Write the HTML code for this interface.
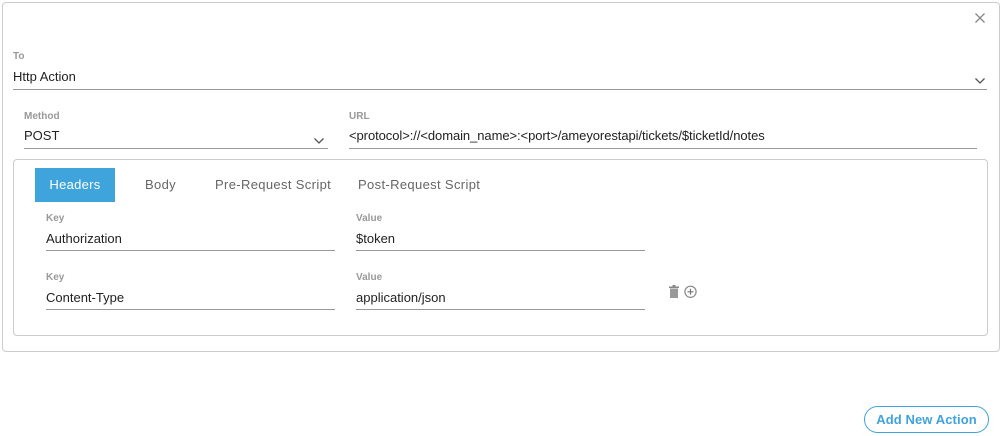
<!DOCTYPE html>
<html><head><meta charset="utf-8"><style>
*{margin:0;padding:0;box-sizing:border-box}
body{width:1005px;height:436px;background:#fff;font-family:"Liberation Sans",sans-serif;position:relative;overflow:hidden;color:#222}
.a{position:absolute;white-space:nowrap}
.lbl{font-size:10px;font-weight:bold;color:#999}
.val{font-size:13px;color:#222}
.ul{position:absolute;height:1px;background:#999}
.tab{font-size:13px;color:#666;letter-spacing:.35px}
</style></head><body>
<div class="a" style="left:2px;top:2px;width:998px;height:350px;border:1px solid #ccc;border-radius:4px"></div>
<svg class="a" style="left:974px;top:12px" width="12" height="12" viewBox="0 0 12 12"><path d="M1.5 1.5L10.5 10.5M10.5 1.5L1.5 10.5" stroke="#888" stroke-width="1.3"/></svg>
<div class="a lbl" style="left:13px;top:51px">To</div>
<div class="a val" style="left:13px;top:69px">Http Action</div>
<div class="ul" style="left:13px;top:89px;width:974px"></div>
<svg class="a" style="left:974px;top:77px" width="12" height="8" viewBox="0 0 12 8"><path d="M1.5 1.5L6 6L10.5 1.5" stroke="#555" stroke-width="1.3" fill="none"/></svg>
<div class="a lbl" style="left:24px;top:111px">Method</div>
<div class="a val" style="left:24px;top:128px">POST</div>
<div class="ul" style="left:24px;top:148px;width:304px"></div>
<svg class="a" style="left:313px;top:137px" width="12" height="8" viewBox="0 0 12 8"><path d="M1.5 1.5L6 6L10.5 1.5" stroke="#555" stroke-width="1.3" fill="none"/></svg>
<div class="a lbl" style="left:349px;top:111px">URL</div>
<div class="a val" style="left:349px;top:128px;letter-spacing:-0.07px">&lt;protocol&gt;://&lt;domain_name&gt;:&lt;port&gt;/ameyorestapi/tickets/$ticketId/notes</div>
<div class="ul" style="left:349px;top:148px;width:628px"></div>
<div class="a" style="left:13px;top:159px;width:975px;height:177px;border:1px solid #ccc;border-radius:4px"></div>
<div class="a" style="left:35px;top:168px;width:80px;height:34px;background:#3fa3dc;color:#fff;font-size:13px;text-align:center;line-height:34px;letter-spacing:.3px">Headers</div>
<div class="a tab" style="left:145px;top:177px">Body</div>
<div class="a tab" style="left:215px;top:177px">Pre-Request Script</div>
<div class="a tab" style="left:358px;top:177px">Post-Request Script</div>
<div class="a lbl" style="left:46px;top:213px">Key</div>
<div class="a val" style="left:46px;top:231px">Authorization</div>
<div class="ul" style="left:46px;top:250px;width:289px"></div>
<div class="a lbl" style="left:356px;top:213px">Value</div>
<div class="a val" style="left:356px;top:231px">$token</div>
<div class="ul" style="left:356px;top:250px;width:289px"></div>
<div class="a lbl" style="left:46px;top:272px">Key</div>
<div class="a val" style="left:46px;top:290px">Content-Type</div>
<div class="ul" style="left:46px;top:309px;width:289px"></div>
<div class="a lbl" style="left:356px;top:272px">Value</div>
<div class="a val" style="left:356px;top:290px">application/json</div>
<div class="ul" style="left:356px;top:309px;width:289px"></div>
<svg class="a" style="left:669px;top:285px" width="30" height="14" viewBox="0 0 30 14"><rect x="0" y="1.5" width="10" height="1.5" fill="#888"/><rect x="3.5" y="0" width="3" height="2" fill="#888"/><rect x="1" y="3.5" width="8" height="9.5" fill="#999"/><circle cx="21.5" cy="6.8" r="5.6" stroke="#888" stroke-width="1.2" fill="none"/><path d="M21.5 3.8V9.8M18.5 6.8H24.5" stroke="#777" stroke-width="1.2"/></svg>
<div class="a" style="left:864px;top:406px;width:125px;height:27px;border:1px solid #3fa3dc;border-radius:14px;color:#3fa3dc;font-size:13px;font-weight:bold;text-align:center;line-height:25px;letter-spacing:.1px">Add New Action</div>
</body></html>
